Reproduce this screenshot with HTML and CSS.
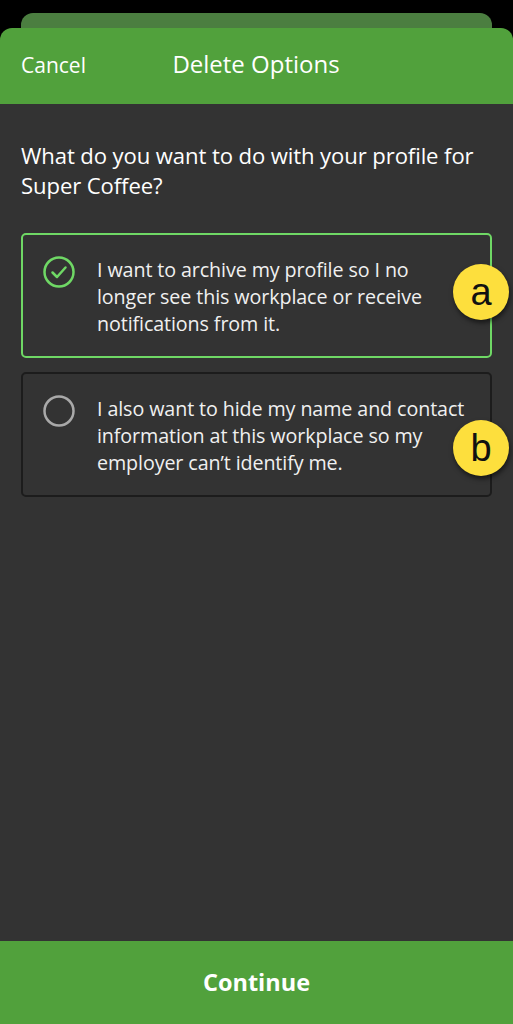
FILE: index.html
```html
<!DOCTYPE html>
<html>
<head>
    <title>Delete Options</title>
    <link rel="stylesheet" href="styles.css">
</head>
<body>
    <div class="screen">
        <div class="back-sheet"></div>
        <div class="header">
            <span class="cancel">Cancel</span>
            <h1 class="title">Delete Options</h1>
        </div>
        <div class="content">
            <p class="question">What do you want to do with your profile for Super Coffee?</p>

            <div class="option selected">
                <svg class="radio" width="32" height="32" viewBox="0 0 32 32">
                    <circle cx="16" cy="16" r="14.5" fill="none" stroke="#6fd865" stroke-width="2.5"/>
                    <path d="M9.5 16.5 L14 21 L22.5 11.5" fill="none" stroke="#6fd865" stroke-width="2.5" stroke-linecap="round" stroke-linejoin="round"/>
                </svg>
                <p class="option-text">I want to archive my profile so I no longer see this workplace or receive notifications from it.</p>
                <span class="badge badge-a">a</span>
            </div>

            <div class="option">
                <svg class="radio" width="32" height="32" viewBox="0 0 32 32">
                    <circle cx="16" cy="16" r="14.5" fill="none" stroke="#a9a9a9" stroke-width="2.5"/>
                </svg>
                <p class="option-text">I also want to hide my name and contact information at this workplace so my employer can’t identify me.</p>
                <span class="badge badge-b">b</span>
            </div>
        </div>
        <div class="continue">Continue</div>
    </div>
</body>
</html>
```

FILE: styles.css
```css
body {
    margin: 0;
    background-color: #000;
    font-family: "Open Sans", Arial, sans-serif;
}

.screen {
    width: 513px;
    height: 1024px;
    display: flex;
    flex-direction: column;
    padding-top: 13px;
    box-sizing: border-box;
    overflow: hidden;
}

.back-sheet {
    height: 15px;
    margin: 0 21px;
    background-color: #4b7e40;
    border-radius: 12px 12px 0 0;
}

.header {
    height: 76px;
    display: flex;
    align-items: center;
    position: relative;
    background-color: #51a13c;
    border-radius: 12px 12px 0 0;
    color: #fff;
}

.cancel {
    padding-left: 21px;
    font-size: 21px;
    margin-top: -2px;
}

.title {
    position: absolute;
    left: 0;
    right: 0;
    top: 20px;
    margin: 0;
    text-align: center;
    font-size: 24px;
    line-height: 32px;
    font-weight: normal;
    padding-right: 1px;
}

.content {
    flex: 1;
    background-color: #333333;
    padding: 36px 21px 0;
}

.question {
    margin: 0 0 33px;
    color: #fff;
    font-size: 22.1px;
    line-height: 30px;
    letter-spacing: -0.1px;
}

.option {
    position: relative;
    display: flex;
    align-items: flex-start;
    border: 2px solid #1c1c1c;
    border-radius: 5px;
    padding: 21px 22px 0 20px;
    margin-bottom: 14px;
    height: 125px;
    box-sizing: border-box;
}

.option.selected {
    border-color: #6fd865;
}

.radio {
    flex-shrink: 0;
    margin-right: 22px;
    margin-top: 0;
}

.option-text {
    margin: 0;
    max-width: 370px;
    color: #f0f0f0;
    font-size: 19.7px;
    line-height: 27px;
    letter-spacing: -0.1px;
}

.badge {
    position: absolute;
    right: -19px;
    width: 56px;
    height: 56px;
    border-radius: 50%;
    background-color: #fddf3d;
    color: #111;
    font-family: "Liberation Sans", Arial, sans-serif;
    font-size: 38px;
    line-height: 57px;
    text-align: center;
    box-shadow: 1px 3px 5px rgba(0, 0, 0, 0.55);
}

.badge-a {
    top: 29px;
}

.badge-b {
    top: 46px;
}

.continue {
    height: 83px;
    background-color: #51a13c;
    color: #fff;
    font-size: 23.5px;
    font-weight: bold;
    text-align: center;
    line-height: 83px;
}
```
